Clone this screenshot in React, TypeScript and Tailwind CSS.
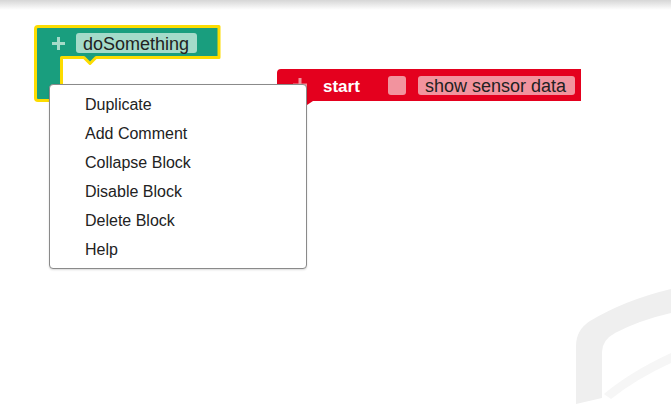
const MENU_ITEMS = [
  "Duplicate",
  "Add Comment",
  "Collapse Block",
  "Disable Block",
  "Delete Block",
  "Help",
];

function Workspace() {
  return (
    <svg className="absolute left-0 top-0" width={671} height={406} viewBox="0 0 671 406">
      {/* trashcan lid, faded */}
      <path
        d="M576,404 V346 Q576,330 590,321 Q625,300 671,289 V313 Q640,320 615,333 Q602,340 602,352 V398 Z"
        fill="#efefef"
      />
      <path d="M604,394 Q630,372 671,353 V363 Q636,379 611,399 Z" fill="#f6f6f6" />

      {/* procedure block */}
      <path
        d="M38,26.5 H219 V57.5 H96 L90,63.5 L84,57.5 H61.5 V88 H160 V100.5 H38 Q35.5,100.5 35.5,98 V29 Q35.5,26.5 38,26.5 Z"
        fill="#199e7e"
        stroke="#fcdc00"
        strokeWidth={3}
        strokeLinejoin="round"
      />
      <rect x={52} y={42} width={13} height={3} fill="#a4dbc9" />
      <rect x={57} y={37} width={3} height={13} fill="#a4dbc9" />
      <rect x={76} y={33} width={121} height={20} rx={3} fill="#a4dbc9" />
      <text
        x={83}
        y={50}
        fontFamily="'Liberation Sans', Arial, sans-serif"
        fontSize={18}
        fill="#222"
      >
        doSomething
      </text>

      {/* start block */}
      <path
        d="M281,69 H581 V101 H313 L307,105 H301 L295,101 H277 V73 Q277,69 281,69 Z"
        fill="#e4001e"
      />
      <rect x={298.5} y={78} width={3} height={14} fill="#f2939e" />
      <rect x={293} y={83.5} width={14} height={3} fill="#f2939e" />
      <text
        x={323}
        y={92}
        fontFamily="'Liberation Sans', Arial, sans-serif"
        fontSize={17}
        fontWeight={700}
        fill="#fff"
      >
        start
      </text>
      <rect x={388} y={76} width={18} height={19} rx={3} fill="#f2939e" />
      <rect x={418} y={76} width={157} height={19} rx={3} fill="#f2939e" />
      <text
        x={425}
        y={92}
        fontFamily="'Liberation Sans', Arial, sans-serif"
        fontSize={18}
        fill="#222"
      >
        show sensor data
      </text>
    </svg>
  );
}

function ContextMenu() {
  return (
    <div className="absolute left-[49px] top-[84px] flex w-[258px] flex-col rounded-[4px] border border-[#8a8a8a] bg-white pb-[4px] pt-[5px] shadow-[0_1px_2px_rgba(0,0,0,0.15)]">
      {MENU_ITEMS.map((item) => (
        <div key={item} className="flex h-[29px] items-center pl-[35px] text-[16px] text-[#222]">
          {item}
        </div>
      ))}
    </div>
  );
}

export default function App() {
  return (
    <div className="relative h-[406px] w-[671px] overflow-hidden bg-white font-['Liberation_Sans',Arial,sans-serif]">
      <Workspace />
      <div className="absolute left-0 top-0 h-[10px] w-full bg-linear-to-b from-[#d6d6d6] to-transparent" />
      <ContextMenu />
    </div>
  );
}
